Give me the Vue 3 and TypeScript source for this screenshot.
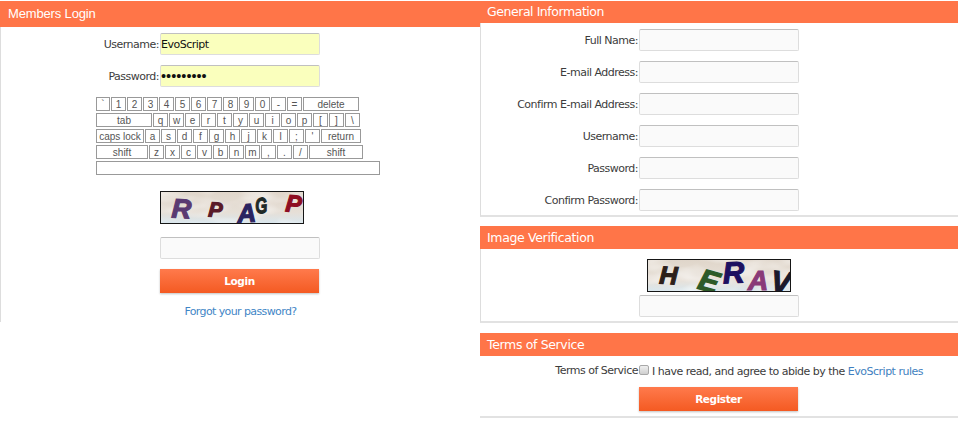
<script setup lang="ts">
interface Key {
  label: string
  width?: number
}
interface Glyph {
  ch: string
  x: number
  y: number
  size: number
  rot: number
  sx?: number
  fill: string
}

const toKeys = (chars: string): Key[] => chars.split(' ').map((label) => ({ label }))

const keyRows: Key[][] = [
  [{ label: '`', width: 14 }, ...toKeys('1 2 3 4 5 6 7 8 9 0 - ='), { label: 'delete', width: 56 }],
  [{ label: 'tab', width: 56 }, ...toKeys('q w e r t y u i o p [ ] \\')],
  [{ label: 'caps lock', width: 48 }, ...toKeys("a s d f g h j k l ; '"), { label: 'return', width: 40 }],
  [{ label: 'shift', width: 52 }, ...toKeys('z x c v b n m , . /'), { label: 'shift', width: 54 }],
  [{ label: '', width: 284 }],
]

const loginCaptcha: Glyph[] = [
  { ch: 'R', x: 21, y: 27, size: 27, rot: 3, fill: '#5a3a72' },
  { ch: 'P', x: 55, y: 26, size: 21, rot: 4, fill: '#5a1a28' },
  { ch: 'A', x: 87, y: 31, size: 26, rot: -4, fill: '#2a2360' },
  { ch: 'G', x: 102, y: 22, size: 22, rot: -6, sx: 0.7, fill: '#1f2a28' },
  { ch: 'P', x: 133, y: 21, size: 24, rot: 5, fill: '#8e0d22' },
]
const registerCaptcha: Glyph[] = [
  { ch: 'H', x: 21, y: 25, size: 25, rot: 3, fill: '#2d1f1a' },
  { ch: 'E', x: 59, y: 32, size: 30, rot: 16, fill: '#2d5a28' },
  { ch: 'R', x: 87, y: 24, size: 30, rot: -3, fill: '#1d1060' },
  { ch: 'A', x: 111, y: 31, size: 28, rot: 0, fill: '#8a3a78' },
  { ch: 'V', x: 133, y: 33, size: 30, rot: 6, fill: '#1a1a2c' },
]

const glyphTransform = (g: Glyph) => `translate(${g.x} ${g.y}) rotate(${g.rot}) scale(${g.sx ?? 1} 1)`

const generalFields = [
  { label: 'Full Name:', type: 'text' },
  { label: 'E-mail Address:', type: 'text' },
  { label: 'Confirm E-mail Address:', type: 'text' },
  { label: 'Username:', type: 'text' },
  { label: 'Password:', type: 'password' },
  { label: 'Confirm Password:', type: 'password' },
]
</script>

<template>
  <div class="page">
    <section class="login">
      <h2 class="bar bar-login">Members Login</h2>
      <div class="login-body">
        <div class="row">
          <label class="lbl">Username:</label>
          <input class="field filled" type="text" value="EvoScript" />
        </div>
        <div class="row">
          <label class="lbl">Password:</label>
          <input class="field filled secret" type="password" value="evoscript" />
        </div>

        <div class="keyboard">
          <div v-for="(keys, r) in keyRows" :key="r" class="key-row">
            <button
              v-for="(k, i) in keys"
              :key="i"
              class="key"
              type="button"
              :style="k.width ? { width: k.width + 'px' } : undefined"
            >
              {{ k.label }}
            </button>
          </div>
        </div>

        <div class="login-stack">
          <svg class="captcha" width="144" height="33" viewBox="0 0 144 33">
            <defs>
              <linearGradient id="paper-a" x1="0" y1="0" x2="0" y2="1">
                <stop offset="0" stop-color="#e0d6ca" />
                <stop offset="0.65" stop-color="#e6dfd7" />
                <stop offset="1" stop-color="#d8e7ef" />
              </linearGradient>
              <filter id="crumple-a" x="0" y="0" width="100%" height="100%">
                <feTurbulence type="fractalNoise" baseFrequency="0.035 0.09" numOctaves="2" seed="4" />
                <feColorMatrix values="0 0 0 0 1  0 0 0 0 1  0 0 0 0 1  1.1 0 0 0 -0.42" />
              </filter>
            </defs>
            <rect width="144" height="33" fill="url(#paper-a)" />
            <rect width="144" height="33" filter="url(#crumple-a)" />
            <text
              v-for="(g, i) in loginCaptcha"
              :key="i"
              class="captcha-letter"
              :font-size="g.size"
              :fill="g.fill"
              :stroke="g.fill"
              text-anchor="middle"
              :transform="glyphTransform(g)"
            >{{ g.ch }}</text>
            <rect x="0.5" y="0.5" width="143" height="32" fill="none" stroke="#161616" />
          </svg>
          <input class="field" type="text" />
          <button class="action" type="button">Login</button>
        </div>

        <a class="forgot" href="#">Forgot your password?</a>
      </div>
    </section>

    <div class="register">
      <section>
        <h2 class="bar bar-first">General Information</h2>
        <div class="panel panel-general">
          <div v-for="f in generalFields" :key="f.label" class="row">
            <label class="lbl">{{ f.label }}</label>
            <input class="field" :type="f.type" />
          </div>
        </div>
      </section>

      <section class="sec-verify">
        <h2 class="bar">Image Verification</h2>
        <div class="panel panel-verify">
          <svg class="captcha" width="144" height="33" viewBox="0 0 144 33">
            <defs>
              <linearGradient id="paper-b" x1="0" y1="0" x2="0" y2="1">
                <stop offset="0" stop-color="#dfd5c9" />
                <stop offset="0.65" stop-color="#e8e1d9" />
                <stop offset="1" stop-color="#d8e7ef" />
              </linearGradient>
              <filter id="crumple-b" x="0" y="0" width="100%" height="100%">
                <feTurbulence type="fractalNoise" baseFrequency="0.035 0.09" numOctaves="2" seed="11" />
                <feColorMatrix values="0 0 0 0 1  0 0 0 0 1  0 0 0 0 1  1.1 0 0 0 -0.42" />
              </filter>
            </defs>
            <rect width="144" height="33" fill="url(#paper-b)" />
            <rect width="144" height="33" filter="url(#crumple-b)" />
            <text
              v-for="(g, i) in registerCaptcha"
              :key="i"
              class="captcha-letter"
              :font-size="g.size"
              :fill="g.fill"
              :stroke="g.fill"
              text-anchor="middle"
              :transform="glyphTransform(g)"
            >{{ g.ch }}</text>
            <rect x="0.5" y="0.5" width="143" height="32" fill="none" stroke="#161616" />
          </svg>
          <input class="field field-verify" type="text" />
        </div>
      </section>

      <section class="sec-terms">
        <h2 class="bar">Terms of Service</h2>
        <div class="panel panel-terms">
          <div class="terms-row">
            <label class="lbl">Terms of Service</label>
            <input class="check" type="checkbox" />
            <span class="agree">I have read, and agree to abide by the <a href="#">EvoScript rules</a></span>
          </div>
          <button class="action action-reg" type="button">Register</button>
        </div>
      </section>
    </div>
  </div>
</template>

<style>
body {
  margin: 0;
  background: #fff;
}
</style>

<style scoped>
.page {
  display: flex;
  width: 958px;
  height: 422px;
  padding-top: 1px;
  box-sizing: border-box;
  overflow: hidden;
  font-family: "DejaVu Sans", Verdana, sans-serif;
  font-size: 11px;
  letter-spacing: -0.5px;
  color: #3c3c3c;
}

.login {
  width: 480px;
  flex: none;
}

.register {
  flex: 1;
  min-width: 0;
}

.bar {
  margin: 0;
  height: 23px;
  padding-left: 7px;
  background: #ff7548;
  color: #fff;
  font-size: 12.5px;
  font-weight: 400;
  letter-spacing: -0.35px;
  line-height: 23px;
}

.bar-first {
  height: 22px;
  letter-spacing: -0.45px;
  line-height: 21px;
}

.bar-login {
  height: 26px;
  padding-left: 8px;
  font-family: "Liberation Sans", Arial, sans-serif;
  font-size: 13px;
  letter-spacing: -0.15px;
  line-height: 26px;
}

.login-body {
  height: 295px;
  padding-top: 6px;
  box-sizing: border-box;
  border-left: 1px solid #ddd;
}

.row {
  display: flex;
  align-items: center;
  height: 22px;
  margin-bottom: 10px;
}

.lbl {
  flex: none;
  width: 158px;
  padding-right: 1px;
  text-align: right;
  white-space: nowrap;
}

.panel-general .lbl {
  width: 157px;
}

.field {
  display: block;
  flex: none;
  width: 160px;
  height: 22px;
  margin: 0;
  padding: 0;
  box-sizing: border-box;
  border: 1px solid #ddd;
  border-top-color: #c0c0c0;
  border-radius: 2px;
  background: #fafafa;
  outline: none;
  font-family: "DejaVu Sans", Verdana, sans-serif;
  font-size: 11px;
  letter-spacing: -0.5px;
  color: #111;
}

.filled {
  background: #faffbd;
}

.secret {
  font-family: "Liberation Sans", Arial, sans-serif;
  font-size: 14.5px;
  letter-spacing: 0;
}

.keyboard {
  display: flex;
  flex-direction: column;
  gap: 2px;
  margin-left: 95px;
}

.key-row {
  display: flex;
  gap: 1px;
}

.key {
  flex: none;
  width: 15px;
  height: 14px;
  margin: 0;
  padding: 0;
  box-sizing: border-box;
  border: 1px solid #999;
  background: #fff;
  font-family: "Liberation Sans", Arial, sans-serif;
  font-size: 10px;
  letter-spacing: 0;
  line-height: 11px;
  color: #555;
}

.login-stack {
  display: flex;
  flex-direction: column;
  align-items: flex-start;
  margin: 16px 0 0 159px;
}

.captcha {
  display: block;
  flex: none;
}

.captcha-letter {
  font-family: "Liberation Sans", Arial, sans-serif;
  font-weight: 700;
  font-style: italic;
  letter-spacing: 0;
  stroke-width: 1.2px;
}

.login-stack .field {
  margin-top: 13px;
}

.action {
  display: block;
  width: 159px;
  height: 24px;
  margin: 10px 0 0;
  padding: 0;
  border: 0;
  background: linear-gradient(#ff7a4c, #f45a22);
  box-shadow: 0 1px 2px rgba(0, 0, 0, 0.25);
  font-family: "DejaVu Sans", Verdana, sans-serif;
  font-size: 10.5px;
  font-weight: 700;
  letter-spacing: -0.4px;
  color: #fff;
}

.forgot {
  display: block;
  width: 479px;
  margin-top: 12px;
  text-align: center;
  text-decoration: none;
  letter-spacing: -0.6px;
  color: #3f86c6;
}

.panel {
  box-sizing: border-box;
  border-left: 1px solid #ddd;
  border-bottom: 2px solid #e2e2e2;
}

.panel-general {
  height: 194px;
  padding-top: 6px;
}

.sec-verify {
  margin-top: 9px;
}

.panel-verify {
  display: flex;
  flex-direction: column;
  height: 74px;
  padding: 10px 0 0 166px;
}

.field-verify {
  margin: 3px 0 0 -8px;
}

.sec-terms {
  margin-top: 10px;
}

.panel-terms {
  height: 62px;
  padding-top: 4px;
  border-left: 0;
}

.terms-row {
  display: flex;
  align-items: center;
  height: 20px;
}

.terms-row .lbl {
  width: 158px;
  padding-right: 0;
  margin-right: 1px;
}

.check {
  width: 10px;
  height: 10px;
  margin: 0 3px 0 0;
  box-sizing: border-box;
  appearance: none;
  border: 1px solid #a8a8a8;
  border-radius: 2px;
  background: linear-gradient(#efefef, #cfcfcf);
}

.agree {
  position: relative;
  top: 1px;
  white-space: nowrap;
}

.agree a {
  color: #3f7fc0;
  text-decoration: none;
}

.action-reg {
  margin: 7px 0 0 159px;
}
</style>
